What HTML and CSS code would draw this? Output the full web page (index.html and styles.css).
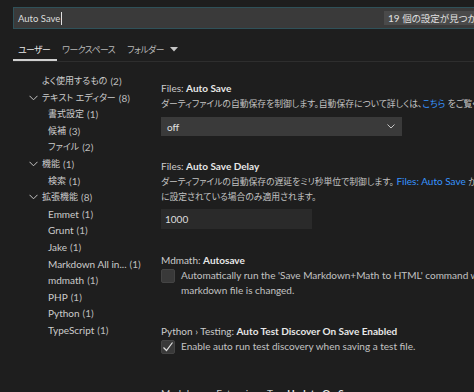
FILE: index.html
```html
<!DOCTYPE html>
<html lang="ja">
<head>
    <meta charset="UTF-8">
    <title>Settings</title>
    <link rel="stylesheet" href="styles.css">
</head>
<body>

    <!-- Search -->
    <div class="search-row">
        <div class="search-box">
            <div class="search-input"><span class="search-text">Auto Save</span><span class="caret-line"></span></div>
            <span class="count-badge">19 <span class="ja">個の設定が見つかりました</span></span>
        </div>
    </div>

    <!-- Scope tabs -->
    <div class="tabs">
        <div class="tab active">ユーザー</div>
        <div class="tab">ワークスペース</div>
        <div class="tab">フォルダー
            <svg class="tab-arrow" width="8" height="5" viewBox="0 0 8 5"><path d="M0 0h8L4 4.5z" fill="#c5c5c5"/></svg>
        </div>
    </div>

    <div class="main">
        <div class="tree">
            <div class="tree-item lvl1"><span class="ja">よく使用するもの</span> <span class="num">(2)</span></div>
            <div class="tree-item lvl1 open"><svg class="chev" width="9" height="6" viewBox="0 0 9 6"><path d="M0.5 0.8L4.5 4.8L8.5 0.8" fill="none" stroke="#c5c5c5" stroke-width="1"/></svg><span class="ja">テキスト エディター</span> <span class="num">(8)</span></div>
            <div class="tree-item lvl2"><span class="ja">書式設定</span> <span class="num">(1)</span></div>
            <div class="tree-item lvl2"><span class="ja">候補</span> <span class="num">(3)</span></div>
            <div class="tree-item lvl2"><span class="ja">ファイル</span> <span class="num">(2)</span></div>
            <div class="tree-item lvl1 open"><svg class="chev" width="9" height="6" viewBox="0 0 9 6"><path d="M0.5 0.8L4.5 4.8L8.5 0.8" fill="none" stroke="#c5c5c5" stroke-width="1"/></svg><span class="ja">機能</span> <span class="num">(1)</span></div>
            <div class="tree-item lvl2"><span class="ja">検索</span> <span class="num">(1)</span></div>
            <div class="tree-item lvl1 open"><svg class="chev" width="9" height="6" viewBox="0 0 9 6"><path d="M0.5 0.8L4.5 4.8L8.5 0.8" fill="none" stroke="#c5c5c5" stroke-width="1"/></svg><span class="ja">拡張機能</span> <span class="num">(8)</span></div>
            <div class="tree-item lvl2">Emmet <span class="num">(1)</span></div>
            <div class="tree-item lvl2">Grunt <span class="num">(1)</span></div>
            <div class="tree-item lvl2">Jake <span class="num">(1)</span></div>
            <div class="tree-item lvl2">Markdown All in... <span class="num">(1)</span></div>
            <div class="tree-item lvl2">mdmath <span class="num">(1)</span></div>
            <div class="tree-item lvl2">PHP <span class="num">(1)</span></div>
            <div class="tree-item lvl2">Python <span class="num">(1)</span></div>
            <div class="tree-item lvl2">TypeScript <span class="num">(1)</span></div>
        </div>

        <div class="settings">
            <div class="setting s-select">
                <div class="title">Files: <b>Auto Save</b></div>
                <div class="desc"><span class="ja">ダーティファイルの自動保存を制御します。自動保存について詳しくは、<span class="link">こちら</span> をご覧ください。</span></div>
                <div class="select">
                    <span>off</span>
                    <svg width="8" height="5" viewBox="0 0 8 5"><path d="M0.5 0.5L4 4L7.5 0.5" fill="none" stroke="#c5c5c5" stroke-width="1"/></svg>
                </div>
            </div>

            <div class="setting s-input">
                <div class="title">Files: <b>Auto Save Delay</b></div>
                <div class="desc"><span class="ja">ダーティファイルの自動保存の遅延をミリ秒単位で制御します。</span> <span class="link">Files: Auto Save</span> <span class="ja">が</span> afterDelay<br><span class="ja">に設定されている場合のみ適用されます。</span></div>
                <div class="text-input">1000</div>
            </div>

            <div class="setting s-check">
                <div class="title">Mdmath: <b>Autosave</b></div>
                <div class="check-row">
                    <span class="checkbox"></span>
                    <div class="desc">Automatically run the 'Save Markdown+Math to HTML' command when the<br>markdown file is changed.</div>
                </div>
            </div>

            <div class="setting s-check2">
                <div class="title">Python › Testing: <b>Auto Test Discover On Save Enabled</b></div>
                <div class="check-row">
                    <span class="checkbox">
                        <svg width="12" height="12" viewBox="0 0 12 12"><path d="M1.5 6.5L4.5 9.5L10.5 1.5" fill="none" stroke="#e0e0e0" stroke-width="1.2"/></svg>
                    </span>
                    <div class="desc">Enable auto run test discovery when saving a test file.</div>
                </div>
            </div>

            <div class="setting">
                <div class="title">Markdown › Extension › Toc: <b>Update On Save</b></div>
            </div>
        </div>
    </div>

</body>
</html>
```

FILE: styles.css
```css
body {
    margin: 0;
    background-color: #1e1e1e;
    color: #cccccc;
    font-family: Lato, "Noto Sans CJK JP", sans-serif;
    font-feature-settings: "palt";
    font-size: 10px;
    height: 392px;
    overflow: hidden;
}

/* Japanese runs are set a little smaller, like Meiryo UI */
.ja {
    font-size: 9px;
}

/* Search */
.search-row {
    padding: 7px 0 0 13px;
    height: 23px;
    overflow: hidden;
}

.search-box {
    width: 560px;
    height: 20px;
    background-color: #3a3a3a;
    border: 1px solid #2f5159;
    display: flex;
    align-items: center;
    padding-left: 4px;
    white-space: nowrap;
    color: #dddddd;
}

.search-input {
    width: 366px;
    display: flex;
    align-items: center;
    font-size: 9.5px;
}

.caret-line {
    display: inline-block;
    width: 1px;
    height: 13px;
    background-color: #e0e0e0;
    margin-left: 1px;
}

.count-badge {
    background-color: #4a4a4a;
    color: #e0e0e0;
    padding: 0 4px;
    height: 14px;
    line-height: 14px;
    font-size: 10px;
}

.count-badge .ja {
    font-size: 9.5px;
}

/* Tabs */
.tabs {
    display: flex;
    margin-left: 13px;
    margin-top: 10px;
    border-bottom: 1px solid #2e2e2e;
    height: 21px;
    font-size: 8.8px;
    letter-spacing: -0.5px;
}

.tab {
    padding: 0 7px 0 5px;
    line-height: 17px;
    color: #b8b8b8;
    border-bottom: 2px solid transparent;
    display: flex;
    align-items: center;
    gap: 6px;
}

.tab.active {
    color: #e7e7e7;
    border-bottom-color: #d0d0d0;
}

/* Layout */
.main {
    display: flex;
}

.tree {
    width: 161px;
    flex-shrink: 0;
    padding-top: 11px;
}

.tree-item {
    height: 16.6px;
    line-height: 16.6px;
    white-space: nowrap;
    color: #cccccc;
    display: flex;
    align-items: center;
}

.tree-item .num {
    margin-left: 3px;
    color: #bdbdbd;
}

.tree-item.lvl1 {
    padding-left: 42px;
}

.tree-item.lvl1.open {
    padding-left: 29px;
}

.tree-item.lvl2 {
    padding-left: 48px;
}

.chev {
    margin-right: 4px;
}

/* Settings */
.settings {
    flex: 1;
    padding-top: 18px;
    white-space: nowrap;
}

.setting {
    margin-bottom: 23px;
}

.setting.s-select {
    margin-bottom: 22px;
}

.setting.s-check {
    margin-bottom: 25px;
}

.setting.s-check2 {
    margin-bottom: 31px;
}

.title {
    line-height: 16px;
    color: #cccccc;
}

.title b {
    color: #e7e7e7;
    font-weight: 700;
}

.desc {
    line-height: 15px;
    color: #c3c3c3;
}

.desc .ja {
    font-size: 8.8px;
}

.link {
    color: #3794ff;
}

.select {
    margin-top: 6px;
    width: 241px;
    height: 19px;
    background-color: #3a3a3a;
    display: flex;
    align-items: center;
    justify-content: space-between;
    padding: 0 7px 0 6px;
    box-sizing: border-box;
    color: #e0e0e0;
}

.text-input {
    margin-top: 5px;
    width: 151px;
    height: 20px;
    line-height: 20px;
    background-color: #2a2a2a;
    padding-left: 4px;
    box-sizing: border-box;
    color: #dddddd;
}

.check-row {
    display: flex;
    align-items: flex-start;
}

.checkbox {
    width: 14px;
    height: 14px;
    margin-top: 1px;
    margin-right: 6px;
    background-color: #393939;
    border: 1px solid #444444;
    box-sizing: border-box;
    border-radius: 2px;
    flex-shrink: 0;
    display: flex;
    align-items: center;
    justify-content: center;
}
```
